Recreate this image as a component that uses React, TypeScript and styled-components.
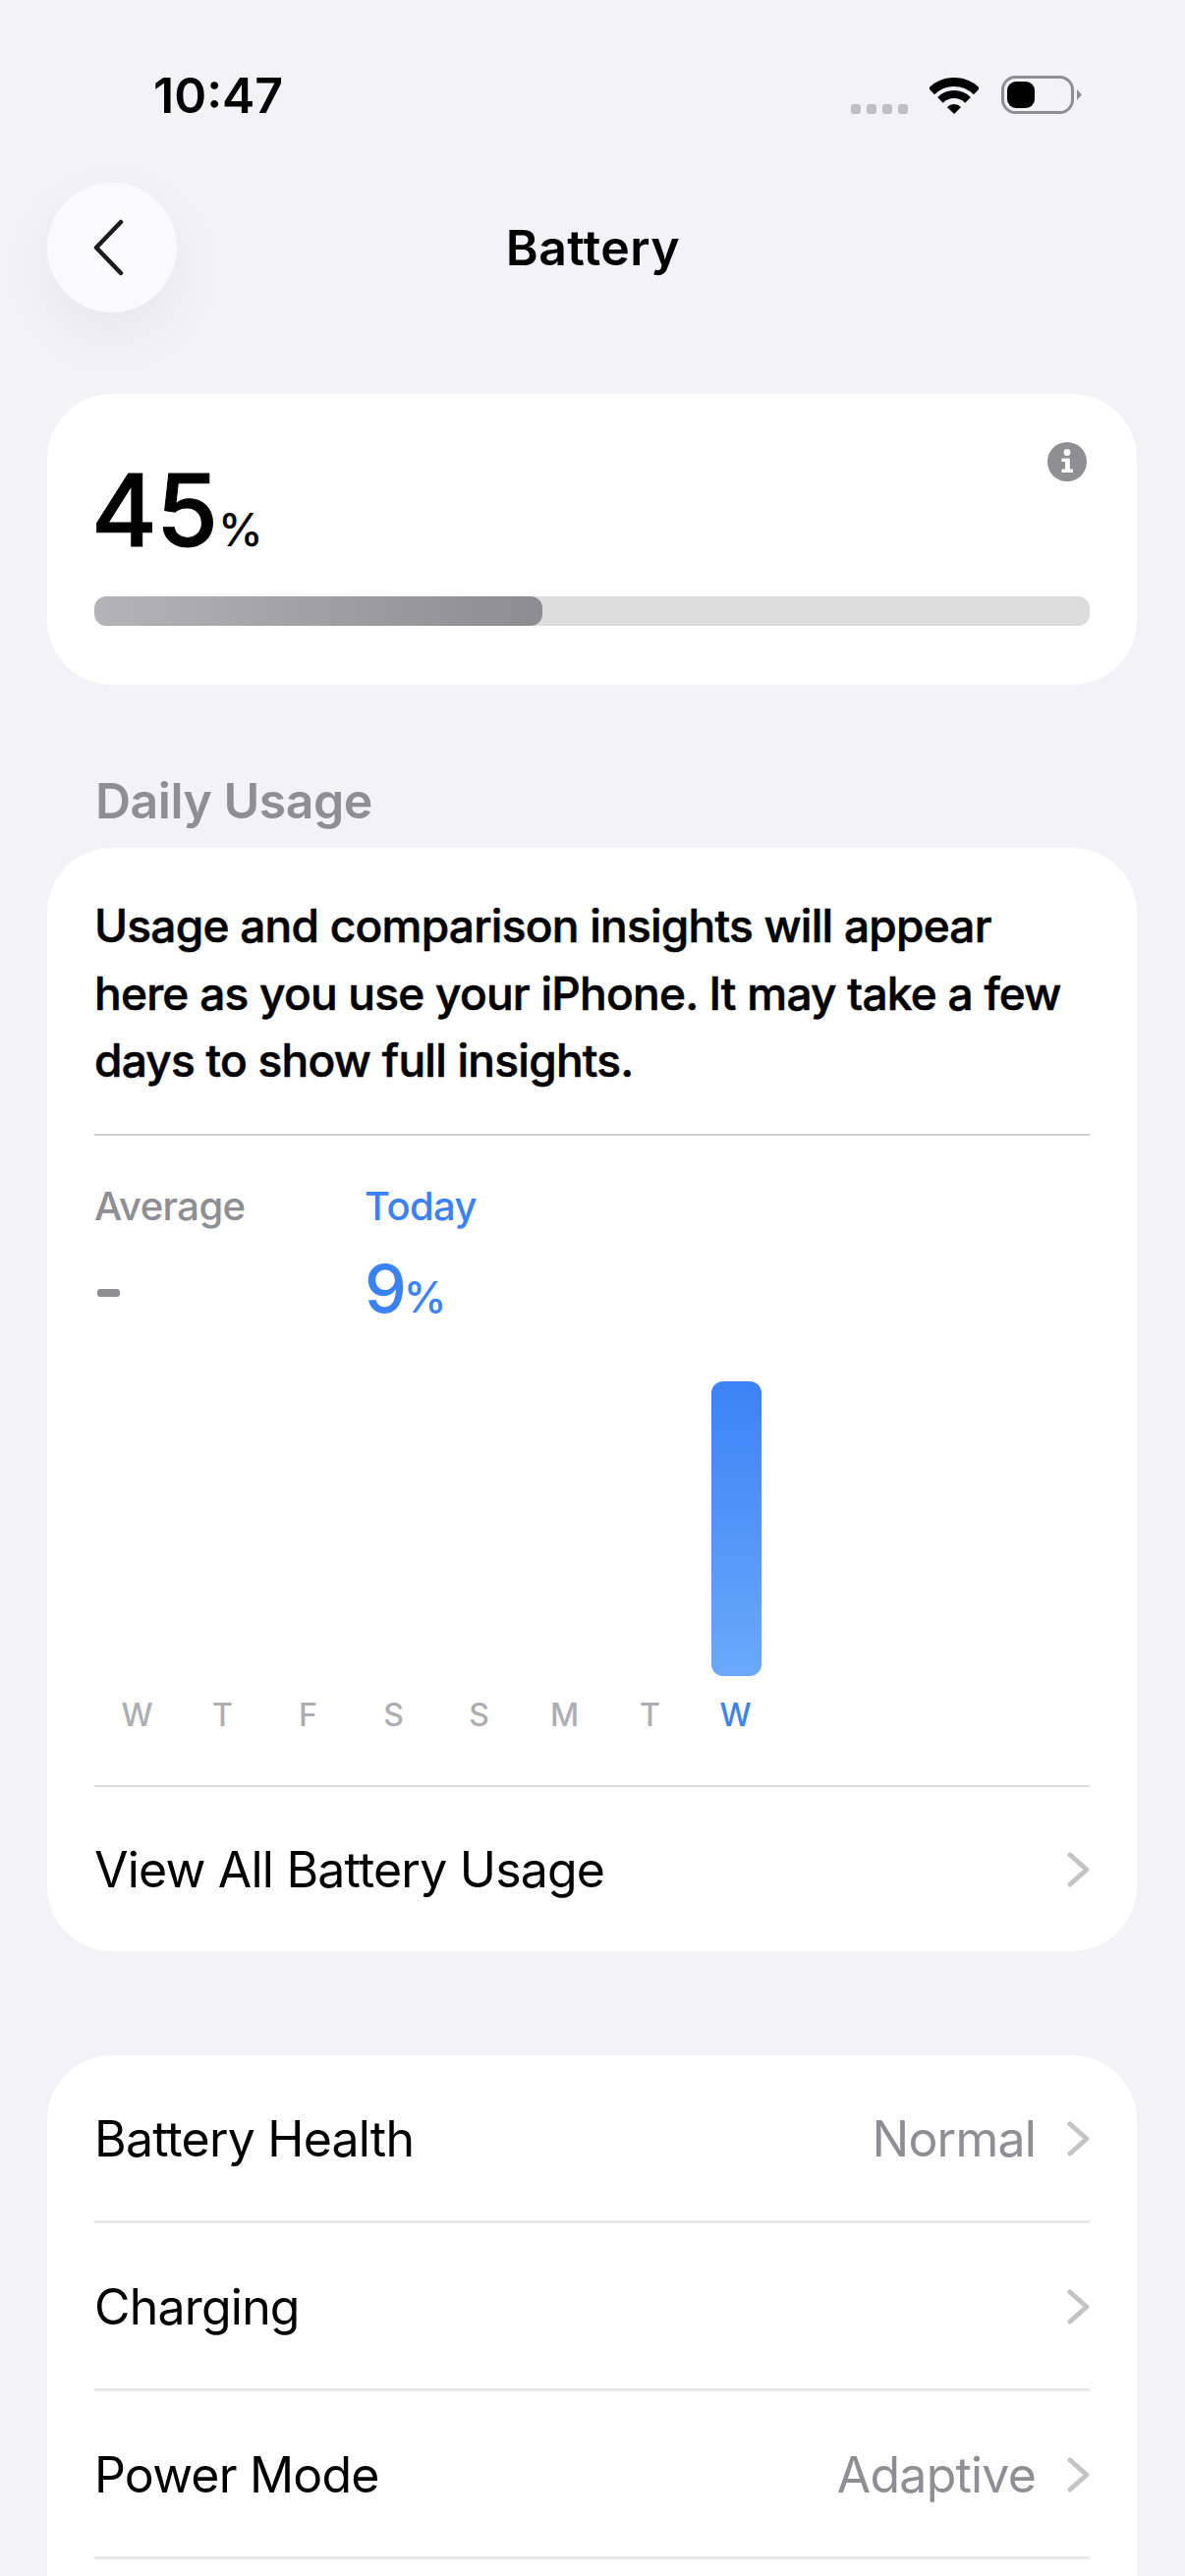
import React from "react";
import styled, { createGlobalStyle } from "styled-components";

const GlobalStyle = createGlobalStyle`
  html, body {
    margin: 0;
    padding: 0;
    background: #f2f2f7;
  }
  * {
    box-sizing: border-box;
  }
`;

const days = ["W", "T", "F", "S", "S", "M", "T", "W"];

const rows = [
  { label: "Battery Health", value: "Normal" },
  { label: "Charging", value: "" },
  { label: "Power Mode", value: "Adaptive" },
];

const Page = styled.div`
  width: 1206px;
  height: 2622px;
  overflow: hidden;
  background: #f2f2f7;
  padding: 0 49px 0 48px;
  font-family: Inter, "Liberation Sans", sans-serif;
  color: #000;
`;

const StatusBar = styled.div`
  height: 186px;
  padding: 67px 0 0 108px;
  display: flex;
  justify-content: space-between;
  align-items: flex-start;
`;

const Time = styled.div`
  font-size: 50px;
  line-height: 60px;
  font-weight: 600;
  letter-spacing: 0;
`;

const StatusIcons = styled.div`
  display: flex;
  align-items: flex-end;
  height: 40px;
  margin: 9px 55px 0 0;
`;

const Signal = styled.div`
  display: flex;
  gap: 6px;
  margin-right: 22px;
`;

const SignalDot = styled.span`
  width: 10px;
  height: 10px;
  border-radius: 3px;
  background: #bebec2;
`;

const Nav = styled.div`
  height: 132px;
  display: flex;
  align-items: center;
  position: relative;
`;

const BackButton = styled.div`
  width: 132px;
  height: 132px;
  border-radius: 50%;
  background: #fafafd;
  box-shadow: 0 22px 60px rgba(0, 0, 0, 0.05);
  display: flex;
  align-items: center;
  justify-content: center;
  padding-right: 9px;
`;

const NavTitle = styled.div`
  flex: 1;
  text-align: center;
  font-size: 50px;
  line-height: 60px;
  font-weight: 600;
  letter-spacing: 0.4px;
  margin-right: 130px;
`;

const Card = styled.div<{ $top: number }>`
  margin-top: ${({ $top }) => $top}px;
  background: #fff;
  border-radius: 66px;
  padding: 0 48px;
`;

const LevelCard = styled(Card)`
  height: 296px;
  padding-top: 49px;
`;

const LevelTop = styled.div`
  display: flex;
  justify-content: space-between;
  align-items: flex-start;
  height: 157px;
  margin-right: 3px;
`;

const LevelValue = styled.div`
  margin-top: 19px;
  margin-left: -3px;
  font-size: 102px;
  line-height: 100px;
  font-weight: 500;
  letter-spacing: -1px;
  -webkit-text-stroke: 1px #000;
`;

const LevelUnit = styled.span`
  font-size: 46px;
  font-weight: 500;
  margin-left: 1px;
  letter-spacing: -0.5px;
  -webkit-text-stroke: 0;
`;

const InfoBadge = styled.div`
  width: 40px;
  height: 40px;
`;

const Track = styled.div`
  height: 30px;
  border-radius: 12px;
  background: #dcdcdc;
  overflow: hidden;
`;

const Fill = styled.div`
  height: 100%;
  border-radius: 12px;
  background: linear-gradient(90deg, #b4b4b7, #8c8c91);
`;

const SectionTitle = styled.div`
  margin: 88px 0 18px 49px;
  font-size: 50px;
  line-height: 60px;
  font-weight: 600;
  letter-spacing: -0.5px;
  color: #8e8e93;
`;

const UsageCard = styled(Card)`
  padding-top: 45px;
`;

const Insight = styled.div`
  font-size: 46px;
  line-height: 68.5px;
  font-weight: 500;
  letter-spacing: -0.75px;
  -webkit-text-stroke: 0.6px #000;
  padding-bottom: 40px;
  border-bottom: 2px solid #d1d1d4;
  white-space: nowrap;
`;

const Stats = styled.div`
  display: flex;
  padding-top: 47px;
`;

const Stat = styled.div<{ $active?: boolean }>`
  width: 275px;
  color: ${({ $active }) => ($active ? "#3b82f6" : "#8e8e93")};
`;

const StatLabel = styled.div`
  font-size: 40px;
  line-height: 50px;
  font-weight: 500;
  letter-spacing: -0.6px;
`;

const StatValue = styled.div`
  margin-top: 23px;
  height: 70px;
  font-size: 68px;
  line-height: 70px;
  font-weight: 500;
`;

const StatUnit = styled.span`
  font-size: 44px;
  font-weight: 500;
  margin-left: -3px;
  letter-spacing: -1px;
`;

const Dash = styled.div`
  width: 23px;
  height: 8px;
  position: relative;
  top: 36px;
  margin-left: 3px;
  border-radius: 3px;
  background: #8e8e93;
`;

const Chart = styled.div`
  margin-top: 60px;
  display: grid;
  grid-template-columns: repeat(8, 87px);
  padding-bottom: 51px;
  border-bottom: 2px solid #dedee0;
`;

const Column = styled.div`
  display: flex;
  flex-direction: column;
  align-items: center;
  justify-content: flex-end;
  height: 360px;
`;

const UsageBar = styled.div`
  width: 51px;
  height: 300px;
  margin-left: 2px;
  border-radius: 12px;
  background: linear-gradient(180deg, #3b82f6, #6aa9fa);
`;

const DayLabel = styled.div<{ $active?: boolean }>`
  margin-top: 20px;
  height: 40px;
  font-size: 32px;
  line-height: 40px;
  font-weight: 500;
  color: ${({ $active }) => ($active ? "#3b82f6" : "#aeaeb2")};
`;

const Row = styled.div`
  height: 167px;
  padding-top: 2px;
  display: flex;
  align-items: center;
  justify-content: space-between;
  font-size: 50px;
  font-weight: 400;
  letter-spacing: -0.8px;
`;

const ListCard = styled(Card)`
  padding-bottom: 120px;
`;

const ListRow = styled(Row)`
  height: 171px;
  border-bottom: 3px solid #e8e8ea;
`;

const RowRight = styled.div`
  display: flex;
  align-items: center;
  gap: 32px;
`;

const RowValue = styled.span`
  color: #8e8e93;
`;

const Chevron = () => (
  <svg width="24" height="36" viewBox="0 0 24 36" fill="none" style={{ marginRight: -1 }}>
    <path d="M3 3 L20 18 L3 33" stroke="#c4c4c7" strokeWidth="5" strokeLinecap="round" strokeLinejoin="round" />
  </svg>
);

const Wifi = () => (
  <svg width="50" height="37" viewBox="0 0 50 37" style={{ marginRight: 23 }}>
    <path d="M2 14 A32.5 32.5 0 0 1 48 14" stroke="#000" strokeWidth="9" fill="none" />
    <path d="M10.9 22.9 A20 20 0 0 1 39.1 22.9" stroke="#000" strokeWidth="8" fill="none" />
    <path d="M25 37 L17.9 29.9 A10 10 0 0 1 32.1 29.9 Z" fill="#000" />
  </svg>
);

const BatteryIcon = () => (
  <svg width="83" height="40" viewBox="0 0 83 40" style={{ marginBottom: -1 }}>
    <rect x="1.5" y="1.5" width="71" height="36" rx="13" fill="none" stroke="#8e8e93" strokeWidth="3" />
    <rect x="6" y="6" width="28" height="27" rx="9" fill="#000" />
    <path d="M77 14 L82 19.5 L77 25 Z" fill="#8e8e93" />
  </svg>
);

const BackIcon = () => (
  <svg width="36" height="58" viewBox="0 0 36 58" fill="none">
    <path d="M31 3 L6 29 L31 55" stroke="#1c1c1e" strokeWidth="4.5" strokeLinecap="round" strokeLinejoin="round" />
  </svg>
);

const InfoIcon = () => (
  <svg width="40" height="40" viewBox="0 0 40 40">
    <circle cx="20" cy="20" r="20" fill="#8e8e93" />
    <circle cx="20" cy="10.5" r="3.4" fill="#fff" />
    <path d="M14.5 16.5 H22.8 V27.5 H26 V31 H14.5 V27.5 H18 V20 H14.5 Z" fill="#fff" />
  </svg>
);

const App: React.FC = () => {
  return (
    <Page>
      <GlobalStyle />
      <StatusBar>
        <Time>10:47</Time>
        <StatusIcons>
          <Signal>
            <SignalDot />
            <SignalDot />
            <SignalDot />
            <SignalDot />
          </Signal>
          <Wifi />
          <BatteryIcon />
        </StatusIcons>
      </StatusBar>

      <Nav>
        <BackButton>
          <BackIcon />
        </BackButton>
        <NavTitle>Battery</NavTitle>
      </Nav>

      <LevelCard $top={83}>
        <LevelTop>
          <LevelValue>
            45<LevelUnit>%</LevelUnit>
          </LevelValue>
          <InfoBadge>
            <InfoIcon />
          </InfoBadge>
        </LevelTop>
        <Track>
          <Fill style={{ width: `${(456 / 1013) * 100}%` }} />
        </Track>
      </LevelCard>

      <SectionTitle>Daily Usage</SectionTitle>

      <UsageCard $top={0}>
        <Insight>
          Usage and comparison insights will appear
          <br />
          here as you use your iPhone. It may take a few
          <br />
          days to show full insights.
        </Insight>
        <Stats>
          <Stat>
            <StatLabel>Average</StatLabel>
            <StatValue>
              <Dash />
            </StatValue>
          </Stat>
          <Stat $active>
            <StatLabel>Today</StatLabel>
            <StatValue>
              9<StatUnit>%</StatUnit>
            </StatValue>
          </Stat>
        </Stats>
        <Chart>
          {days.map((day, i) => (
            <Column key={i}>
              {i === days.length - 1 && <UsageBar />}
              <DayLabel $active={i === days.length - 1}>{day}</DayLabel>
            </Column>
          ))}
        </Chart>
        <Row>
          <span>View All Battery Usage</span>
          <Chevron />
        </Row>
      </UsageCard>

      <ListCard $top={106}>
        {rows.map((row) => (
          <ListRow key={row.label}>
            <span>{row.label}</span>
            <RowRight>
              {row.value && <RowValue>{row.value}</RowValue>}
              <Chevron />
            </RowRight>
          </ListRow>
        ))}
      </ListCard>
    </Page>
  );
};

export default App;
